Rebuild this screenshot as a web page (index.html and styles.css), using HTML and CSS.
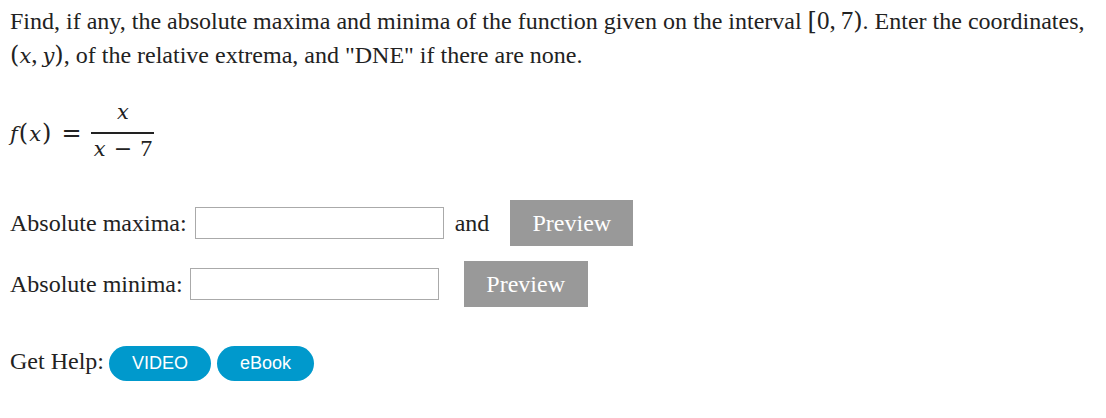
FILE: index.html
```html
<!DOCTYPE html>
<html>
<head>
<meta charset="utf-8">
<link rel="stylesheet" href="styles.css">
</head>
<body>
<div class="problem">
  <p class="intro">Find, if any, the absolute maxima and minima of the function given on the interval <span class="m"><span class="br">[</span>0,&#8201;7<span class="br">)</span></span>. Enter the coordinates,<br><span class="m"><span class="br">(</span><i>x</i>,&#8201;<i>y</i><span class="br">)</span></span>, of the relative extrema, and "DNE" if there are none.</p>

  <div class="formula">
    <span class="lhs"><i>f</i><span class="br">(</span><i>x</i><span class="br">)</span></span>
    <span class="eq">=</span>
    <span class="frac">
      <span class="num"><i>x</i></span>
      <span class="den"><i>x</i><span class="minus">&minus;</span>7</span>
    </span>
  </div>

  <div class="row row-max">
    <label class="lbl">Absolute maxima:</label>
    <input class="ans" type="text">
    <span class="and">and</span>
    <button class="preview">Preview</button>
  </div>

  <div class="row row-min">
    <label class="lbl">Absolute minima:</label>
    <input class="ans" type="text">
    <button class="preview preview-min">Preview</button>
  </div>

  <div class="help">
    <span class="lbl">Get Help:</span>
    <button class="pill">VIDEO</button>
    <button class="pill">eBook</button>
  </div>
</div>
</body>
</html>
```

FILE: styles.css
```css
html, body {
  margin: 0;
  padding: 0;
  background: #fff;
}

body {
  font-family: "Liberation Serif", "Times New Roman", serif;
  font-size: 24px;
  color: #222;
}

.problem {
  padding: 0 10px;
}

.intro {
  margin: 0;
  padding-top: 4px;
  line-height: 34px;
}

.m {
  font-family: "Liberation Serif", serif;
  font-size: 25px;
}

.br {
  font-family: "DejaVu Serif", serif;
  font-size: 24px;
}

i {
  font-family: "DejaVu Serif", serif;
  font-style: italic;
  font-size: 21px;
}

.formula {
  display: flex;
  align-items: center;
  margin-top: 24px;
  height: 72px;
}

.lhs {
  font-size: 25px;
  line-height: 28px;
  letter-spacing: 1px;
}

.eq {
  margin: 0 10px 0 9px;
  font-family: "DejaVu Sans", sans-serif;
  font-size: 24px;
  line-height: 28px;
}

.frac {
  display: inline-flex;
  flex-direction: column;
  align-items: stretch;
  width: 63px;
  text-align: center;
}

.num {
  line-height: 28px;
  padding-bottom: 6px;
  border-bottom: 2px solid #222;
}

.den {
  line-height: 28px;
  padding-bottom: 6px;
}

.minus {
  margin: 0 8px;
  font-family: "DejaVu Sans", sans-serif;
  font-size: 22px;
}

.row {
  display: flex;
  align-items: center;
}

.row-max {
  margin-top: 31px;
  height: 46px;
}

.row-min {
  margin-top: 15px;
  height: 46px;
}

.lbl {
  line-height: 28px;
}

.ans {
  box-sizing: border-box;
  width: 249px;
  height: 32px;
  margin: 0 0 0 8px;
  padding: 0 6px;
  border: 1px solid #aaa;
  border-radius: 0;
  background: #fff;
  font-size: 16px;
}

.row-min .ans {
  margin-left: 7px;
}

.and {
  margin-left: 11px;
  line-height: 28px;
}

.preview {
  box-sizing: border-box;
  height: 46px;
  width: 123px;
  margin-left: 21px;
  padding: 0;
  border: none;
  background: #999;
  color: #fff;
  font-family: "Liberation Serif", "Times New Roman", serif;
  font-size: 24px;
}

.preview.preview-min {
  width: 124px;
  margin-left: 25px;
}

.help {
  display: flex;
  align-items: center;
  margin-top: 39px;
  height: 35px;
}

.help .lbl {
  padding-bottom: 5px;
}

.pill {
  box-sizing: border-box;
  height: 35px;
  margin-left: 6px;
  padding: 0 23px;
  border: none;
  border-radius: 18px;
  background: #0099cc;
  color: #fff;
  font-family: "Liberation Sans", Arial, sans-serif;
  font-size: 18px;
}

.help .lbl + .pill {
  width: 102px;
  margin-left: 5px;
}
```
